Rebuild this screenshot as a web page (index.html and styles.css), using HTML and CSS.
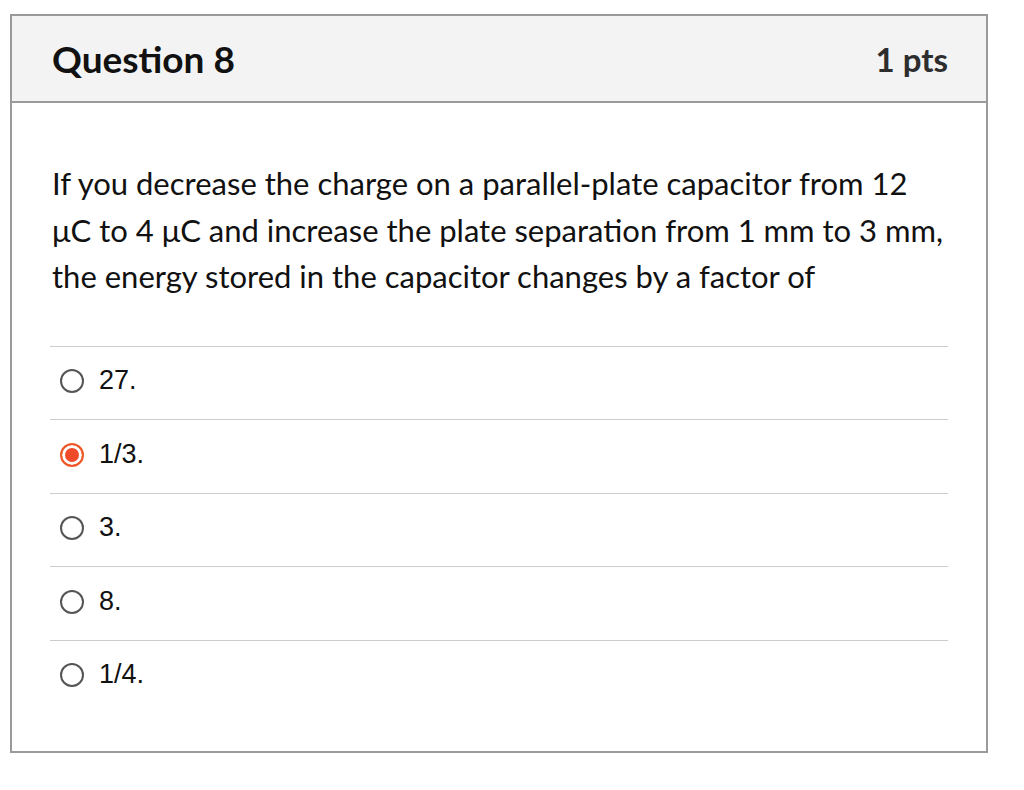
FILE: index.html
```html
<!DOCTYPE html>
<html>
<head>
<meta charset="utf-8">
<link rel="stylesheet" href="styles.css">
</head>
<body>
<div class="card">
  <div class="header">
    <h2 class="title">Question 8</h2>
    <span class="pts">1 pts</span>
  </div>
  <div class="content">
    <p class="question">If you decrease the charge on a parallel-plate capacitor from 12 μC to 4 μC and increase the plate separation from 1 mm to 3 mm, the energy stored in the capacitor changes by a factor of</p>
    <div class="answers">
      <div class="answer"><span class="radio"></span><span class="label">27.</span></div>
      <div class="answer"><span class="radio checked"></span><span class="label">1/3.</span></div>
      <div class="answer"><span class="radio"></span><span class="label">3.</span></div>
      <div class="answer"><span class="radio"></span><span class="label">8.</span></div>
      <div class="answer"><span class="radio"></span><span class="label">1/4.</span></div>
    </div>
  </div>
</div>
</body>
</html>
```
FILE: styles.css
```css
html, body {
  margin: 0;
  padding: 0;
  background: #ffffff;
}
body {
  font-family: Lato, "Liberation Sans", sans-serif;
  color: #111;
}
.card {
  margin: 14px 0 0 10px;
  width: 974px;
  border: 2px solid #9a9a9a;
  box-sizing: content-box;
}
.header {
  height: 85px;
  background: #f3f3f3;
  border-bottom: 2px solid #9a9a9a;
  display: flex;
  align-items: center;
  justify-content: space-between;
  padding: 0 38px 0 40px;
}
.title {
  margin: 0;
  font-size: 37px;
  font-weight: 700;
  color: #111;
}
.pts {
  font-size: 33px;
  font-weight: 700;
  color: #2d2d2d;
}
.content {
  padding: 57px 38px 38px 38px;
}
.question {
  margin: 0 3px 0 2px;
  font-size: 31px;
  line-height: 46.5px;
  color: #111;
}
.answers {
  margin-top: 46px;
}
.answer {
  border-top: 1px solid #cccccc;
  height: 72.5px;
  display: flex;
  align-items: center;
  padding-left: 10px;
}
.radio {
  width: 20px;
  height: 20px;
  border: 2px solid #555;
  border-radius: 50%;
  box-sizing: content-box;
  flex: none;
  margin-top: -3px;
}
.radio.checked {
  border-color: #ef5a2a;
  background: #ef4b2b;
  box-shadow: inset 0 0 0 3px #fff;
}
.label {
  margin-left: 15px;
  margin-top: -4px;
  font-family: "Liberation Sans", Arial, sans-serif;
  font-size: 27px;
  color: #111;
}
```
